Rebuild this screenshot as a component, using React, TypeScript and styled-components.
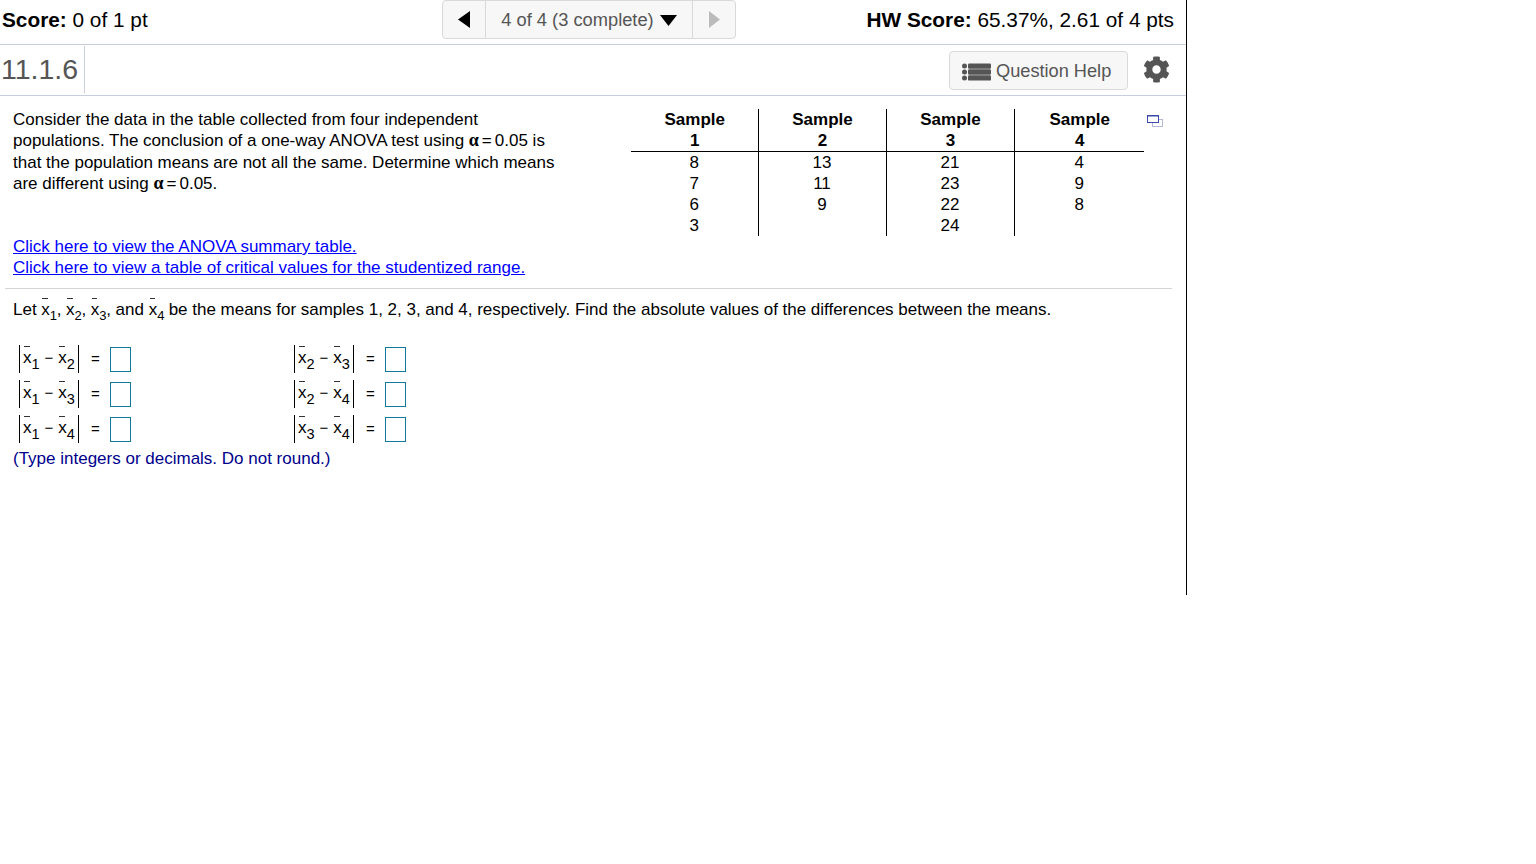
import React from "react";
import styled, { createGlobalStyle } from "styled-components";
import { FaCog } from "react-icons/fa";

const Global = createGlobalStyle`
  html, body { margin: 0; padding: 0; background: #fff; }
  body { font-family: "Liberation Sans", Arial, sans-serif; color: #000; }
`;
const Page = styled.div`
  width: 1186px; height: 595px; border-right: 1px solid #000;
`;
const TopBar = styled.div`
  border-bottom: 1px solid #c8cde0; display: flex; align-items: center; padding: 0 12px 5px 2px; height: 39px;
`;
const Score = styled.div`
  font-size: 20.8px; line-height: 40px; white-space: nowrap; width: 440px; flex: none;
`;
const HwScore = styled.div`
  font-size: 20.8px; line-height: 40px; white-space: nowrap; margin-left: auto;
`;
const Nav = styled.div`
  display: flex; width: 294px; height: 39px; box-sizing: border-box; border: 1px solid #d9d9d9; border-radius: 4px; background: #f7f7f7; margin-top: -1px;
`;
const NavBtn = styled.div<{ $side: "l" | "r" }>`
  width: 43px; box-sizing: border-box; display: flex; align-items: center; justify-content: center; flex: none;
  ${p => (p.$side === "l" ? "border-right: 1px solid #d9d9d9; padding-right: 1px;" : "border-left: 1px solid #d9d9d9;")}
`;
const NavLabel = styled.div`
  flex: 1; display: flex; align-items: center; justify-content: center; gap: 6px; font-size: 18.3px; color: #555; white-space: nowrap; padding-top: 2px; box-sizing: border-box;
`;
const SubBar = styled.div`
  height: 50px; border-bottom: 1px solid #c8cde0; display: flex; align-items: center; padding: 0 16px 0 1px;
`;
const SectionNumber = styled.div`
  font-size: 28.5px; color: #555; height: 47px; line-height: 47px; width: 83px; border-right: 1px solid #c8cde0; margin-top: -1px; flex: none;
`;
const HelpBtn = styled.div`
  margin-left: auto; width: 179px; height: 39px; box-sizing: border-box; border: 1px solid #d9d9d9; border-radius: 4px; background: #f7f7f7;
  display: flex; align-items: center; gap: 5px; padding: 2px 0 0 12px; font-size: 18.2px; color: #555; margin-top: 1px;
`;
const Gear = styled.div`
  margin-left: 15px; width: 27px; height: 27px; margin-top: -1px; display: flex; color: #555;
`;
const Content = styled.div`
  padding: 13px 14px 0 5px;
  font-size: 17px; line-height: 21.33px;
`;
const Question = styled.div`
  display: flex; padding-left: 8px; height: 127px;
`;
const Intro = styled.div`
  width: 618px; flex: none;
`;
const IntroText = styled.div`
  width: 560px;
`;
const DataTable = styled.table`
  border-collapse: collapse; width: 513px; table-layout: fixed; height: 126px;
`;
const Th = styled.th`
  font-weight: bold; padding: 1px 0 0 1px; border-bottom: 1px solid #000; height: 41px; line-height: 20.7px;
  &:nth-child(1) { width: 125.5px; }
  &:nth-child(2), &:nth-child(3) { width: 126px; }
  &:not(:last-child) { border-right: 1px solid #000; }
`;
const Td = styled.td`
  text-align: center; padding: 0; height: 21px; line-height: 21px;
  &:not(:last-child) { border-right: 1px solid #000; }
`;
const TableIcon = styled.div`
  margin: 3px 0 0 3px; width: 16px; height: 14px;
`;
const Links = styled.div`
  padding-left: 8px;
`;
const LinkLine = styled.a`
  display: block; color: #00f; text-decoration: underline; line-height: 21px;
`;
const Rule = styled.div`
  height: 1px; background: #d4d4d4; margin-top: 10px;
`;
const Sentence = styled.div`
  padding: 10px 0 0 8px; white-space: nowrap; line-height: 21px; letter-spacing: -0.012px;
`;
const EqGrid = styled.div`
  display: grid; grid-template-columns: 275px 275px; margin: 26px 0 0 14px; row-gap: 9px;
`;
const Eq = styled.div`
  display: flex; align-items: center; height: 26px;
`;
const Abs = styled.div`
  height: 28px; border-left: 1px solid #000; border-right: 1px solid #000; padding: 0 0 0 3px; margin-right: 12px; white-space: nowrap; box-sizing: border-box; width: 60px; font-size: 17px; line-height: 26px;
`;
const Minus = styled.span`
  margin: 0 5px; font-size: 15px;
`;
const Equals = styled.span`
  font-size: 15px; margin-right: 8px; width: 11px;
`;
const Box = styled.div`
  width: 21px; height: 25px; box-sizing: border-box; border: 1px solid #117a9c;
`;
const Bar = styled.span`
  position: relative; display: inline-block; line-height: 1;
  &::before { content: ""; position: absolute; left: 1px; right: 2px; top: -3px; height: 1px; background: #333; }
`;
const Sub = styled.sub<{ $big?: boolean }>`
  font-size: ${p => (p.$big ? 14.5 : 13)}px; line-height: 0; vertical-align: ${p => (p.$big ? -6 : -5)}px; margin-right: ${p => (p.$big ? 0 : -0.4)}px;
`;
const Note = styled.div`
  color: #00008b; padding-left: 8px; margin-top: 6px; line-height: 21px;
`;
const Alpha = styled.span`
  font-family: "Liberation Serif", serif; font-weight: bold; font-size: 18px;
`;
const EqSign = styled.span`
  margin: 0 3px;
`;

const X = ({ n, big }: { n: number; big?: boolean }) => (
  <>
    <Bar>x</Bar>
    <Sub $big={big}>{n}</Sub>
  </>
);
const Equation = ({ a, b }: { a: number; b: number }) => (
  <Eq>
    <Abs>
      <X n={a} big />
      <Minus>−</Minus>
      <X n={b} big />
    </Abs>
    <Equals>=</Equals>
    <Box />
  </Eq>
);

const rows = [
  ["8", "13", "21", "4"],
  ["7", "11", "23", "9"],
  ["6", "9", "22", "8"],
  ["3", "", "24", ""],
];

export default function App() {
  return (
    <Page>
      <Global />
      <TopBar>
        <Score><b>Score:</b> 0 of 1 pt</Score>
        <Nav>
          <NavBtn $side="l">
            <svg width="12" height="17" viewBox="0 0 12 17"><path d="M12 0V17L0 8.5Z" fill="#000" /></svg>
          </NavBtn>
          <NavLabel>
            4 of 4 (3 complete)
            <svg width="17" height="11" viewBox="0 0 17 11"><path d="M0 0H17L8.5 11Z" fill="#000" /></svg>
          </NavLabel>
          <NavBtn $side="r">
            <svg width="11" height="17" viewBox="0 0 11 17"><path d="M0 0V17L11 8.5Z" fill="#bbb" /></svg>
          </NavBtn>
        </Nav>
        <HwScore><b>HW Score:</b> 65.37%, 2.61 of 4 pts</HwScore>
      </TopBar>
      <SubBar>
        <SectionNumber>11.1.6</SectionNumber>
        <HelpBtn>
          <svg width="29" height="18" viewBox="0 0 29 18" fill="#555">
            <circle cx="2.5" cy="3" r="2.5" /><circle cx="2.5" cy="9" r="2.5" /><circle cx="2.5" cy="15" r="2.5" />
            <rect x="6" y="0.4" width="23" height="5.4" rx="1.2" /><rect x="6" y="6.3" width="23" height="5.4" rx="1.2" /><rect x="6" y="12.2" width="23" height="5.4" rx="1.2" />
          </svg>
          Question Help
        </HelpBtn>
        <Gear>
          <FaCog size={27} />
        </Gear>
      </SubBar>
      <Content>
        <Question>
          <Intro>
            <IntroText>
              Consider the data in the table collected from four independent populations. The conclusion of a one-way ANOVA test using <Alpha>α</Alpha><EqSign>=</EqSign>0.05 is that the population means are not all the same. Determine which means are different using <Alpha>α</Alpha><EqSign>=</EqSign>0.05.
            </IntroText>
          </Intro>
          <DataTable>
            <thead>
              <tr>
                {[1, 2, 3, 4].map(n => (
                  <Th key={n}>Sample<br />{n}</Th>
                ))}
              </tr>
            </thead>
            <tbody>
              {rows.map((r, i) => (
                <tr key={i}>
                  {r.map((c, j) => <Td key={j}>{c}</Td>)}
                </tr>
              ))}
            </tbody>
          </DataTable>
          <TableIcon>
            <svg width="16" height="13" viewBox="0 0 16 13" fill="none">
              <rect x="5.5" y="4.5" width="10" height="7" stroke="#b5b8d8" />
              <rect x="0.5" y="0.5" width="11" height="7" fill="#fff" stroke="#3b4aa8" />
              <rect x="0.5" y="0.5" width="11" height="1" fill="#3b4aa8" />
            </svg>
          </TableIcon>
        </Question>
        <Links>
          <LinkLine href="#">Click here to view the ANOVA summary table.</LinkLine>
          <LinkLine href="#">Click here to view a table of critical values for the studentized range.</LinkLine>
        </Links>
        <Rule />
        <Sentence>
          Let <X n={1} />, <X n={2} />, <X n={3} />, and <X n={4} /> be the means for samples 1, 2, 3, and 4, respectively. Find the absolute values of the differences between the means.
        </Sentence>
        <EqGrid>
          <Equation a={1} b={2} />
          <Equation a={2} b={3} />
          <Equation a={1} b={3} />
          <Equation a={2} b={4} />
          <Equation a={1} b={4} />
          <Equation a={3} b={4} />
        </EqGrid>
        <Note>(Type integers or decimals. Do not round.)</Note>
      </Content>
    </Page>
  );
}
